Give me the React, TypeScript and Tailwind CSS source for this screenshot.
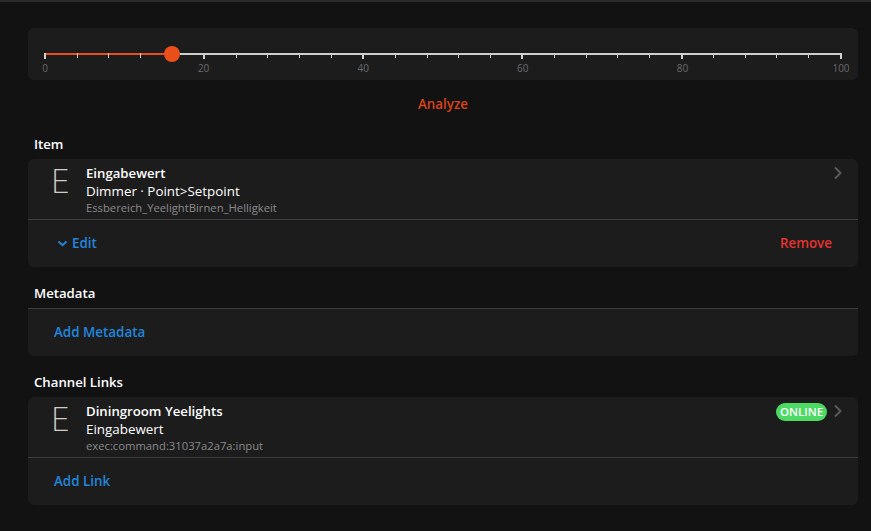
import React from "react";

const font = { fontFamily: '"Open Sans", "Noto Sans", sans-serif' };

function Chevron() {
  return (
    <svg width="10" height="14" viewBox="0 0 10 14" className="shrink-0">
      <path d="M2 1.5 L7.5 7 L2 12.5" fill="none" stroke="#5a5a5c" strokeWidth="2" />
    </svg>
  );
}

function Slider() {
  const ticks = Array.from({ length: 26 }, (_, i) => i);
  return (
    <div className="rounded-md bg-[#1c1c1d] h-[52px] px-4 pt-[25px]">
      <div className="relative h-[2px] w-[798px] bg-[#cfcfcf]">
        <div className="absolute left-0 top-0 h-[2px] w-[128px] bg-[#e94e1b]" />
        <div className="absolute inset-x-0 top-0 flex justify-between">
          {ticks.map((i) => (
            <div
              key={i}
              className={i % 5 === 0 ? "w-[2px] h-[6px] bg-[#cfcfcf]" : "w-px h-[5px] bg-[#cfcfcf]"}
            />
          ))}
        </div>
        <div className="absolute left-[120px] top-[-7px] w-4 h-4 rounded-full bg-[#e94e1b]" />
        {[0, 20, 40, 60, 80, 100].map((n) => (
          <span
            key={n}
            className={
              n === 100
                ? "absolute top-[8px] -ml-[1px] -translate-x-1/2 text-[10px] leading-[14px] text-[#6a6a6c]"
                : n === 0
                ? "absolute top-[8px] ml-[1px] -translate-x-1/2 text-[10px] leading-[14px] text-[#6a6a6c]"
                : "absolute top-[8px] -translate-x-1/2 text-[10px] leading-[14px] text-[#6a6a6c]"
            }
            style={{ left: `${n}%` }}
          >
            {n}
          </span>
        ))}
      </div>
    </div>
  );
}

function Row({ title, sub, foot, badge }: { title: string; sub: string; foot: string; badge?: boolean }) {
  return (
    <div className="flex h-[61px] border-b border-[#3d3d3e]">
      <div
        className="w-[58px] pl-[23px] pt-[3px] text-[32px] leading-[40px] text-[#d2cdc6]"
        style={{ fontFamily: 'Inter, sans-serif', fontWeight: 200 }}
      >
        E
      </div>
      <div className="flex-1 pt-[5px]">
        <div className="text-[13.2px] leading-[18px] font-semibold text-white">{title}</div>
        <div className="text-[13.4px] leading-[18px] text-white">{sub}</div>
        <div className="text-[11.25px] leading-[16px] text-[#8a8a8c]">{foot}</div>
      </div>
      <div className="flex items-start gap-[6px] pt-[6px] pr-[15px]">
        {badge && (
          <span className="rounded-full bg-[#4cd964] h-[18px] w-[51px] pl-[4px] text-[11.5px] leading-[18px] font-semibold text-white overflow-hidden">
            ONLINE
          </span>
        )}
        <span className="mt-[1px]"><Chevron /></span>
      </div>
    </div>
  );
}

function Heading({ children }: { children: React.ReactNode }) {
  return <div className="pl-[6px] text-[13.2px] leading-[18px] font-semibold text-white">{children}</div>;
}

export default function App() {
  return (
    <div className="min-h-[531px] bg-[#121212] border-t-2 border-[#2b2b2c] pt-[26px] pl-[28px] pr-[13px]" style={font}>
      <Slider />
      <div className="pt-[15px] pb-[22px] text-center text-[13.4px] leading-[18px] font-semibold text-[#d8431a]">Analyze</div>

      <Heading>Item</Heading>
      <div className="mt-[6px] rounded-md bg-[#1c1c1d] h-[108px]">
        <Row title="Eingabewert" sub="Dimmer · Point>Setpoint" foot="Essbereich_YeelightBirnen_Helligkeit" />
        <div className="flex justify-between items-center h-[47px] pl-[29px] pr-[26px] text-[13.4px] font-semibold">
          <span className="flex items-center gap-[4px] text-[#2186dc]">
            <svg width="11" height="7" viewBox="0 0 11 7">
              <path d="M1.5 1.5 L5.5 5.2 L9.5 1.5" fill="none" stroke="#2186dc" strokeWidth="1.8" />
            </svg>
            Edit
          </span>
          <span className="text-[#e5332e]">Remove</span>
        </div>
      </div>

      <div className="mt-[17px]"><Heading>Metadata</Heading></div>
      <div className="mt-[6px] rounded-b-md bg-[#1c1c1d] h-[48px] border-t border-[#3d3d3e] pl-[26px] flex items-center text-[13.4px] font-semibold text-[#2186dc]">
        Add Metadata
      </div>

      <div className="mt-[17px]"><Heading>Channel Links</Heading></div>
      <div className="mt-[6px] rounded-md bg-[#1c1c1d] h-[108px]">
        <Row title="Diningroom Yeelights" sub="Eingabewert" foot="exec:command:31037a2a7a:input" badge />
        <div className="flex items-center h-[47px] pl-[26px] text-[13.4px] font-semibold text-[#2186dc]">Add Link</div>
      </div>
    </div>
  );
}
